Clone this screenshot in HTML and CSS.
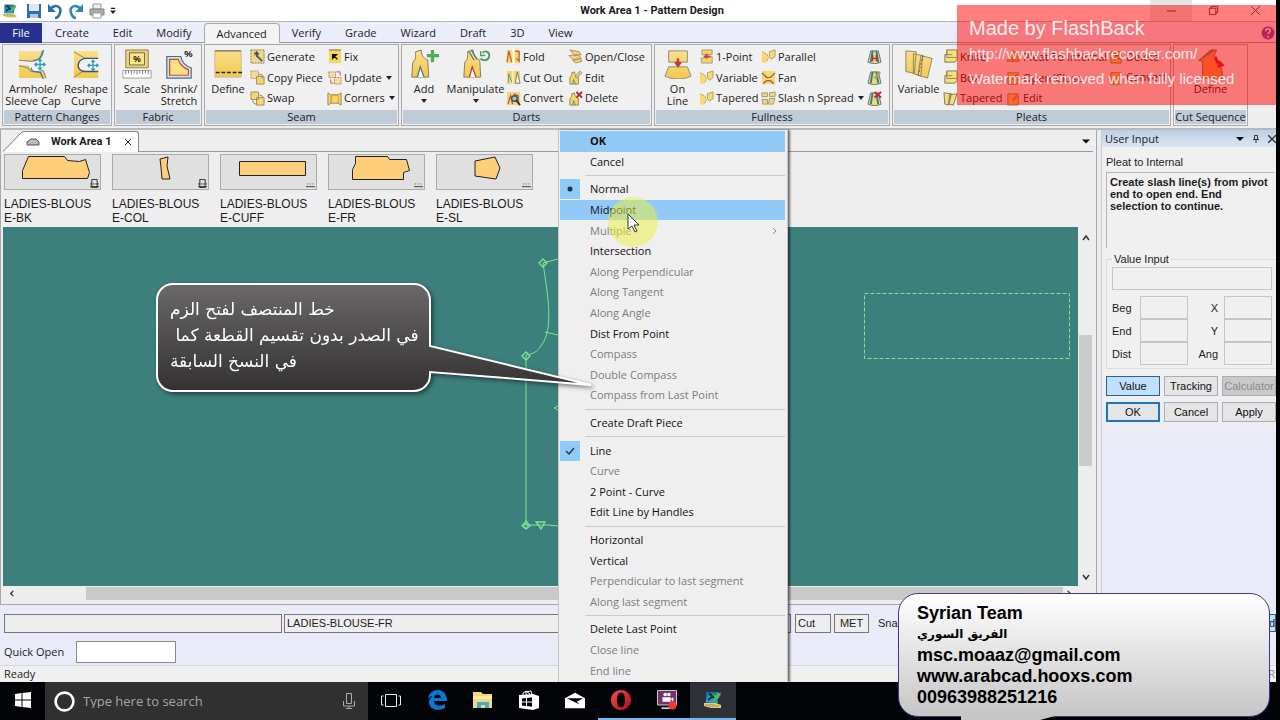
FILE: index.html
```html
<!DOCTYPE html>
<html lang="en">
<head>
<meta charset="utf-8">
<title>Work Area 1 - Pattern Design</title>
<link rel="stylesheet" href="styles.css">
</head>
<body>
<svg class="defs" aria-hidden="true">
  <defs>
    <linearGradient id="gold" x1="0" y1="0" x2="0" y2="1"><stop offset="0" stop-color="#f9e08a"/><stop offset="1" stop-color="#f2c84f"/></linearGradient>
    <linearGradient id="dark" x1="0" y1="0" x2="0" y2="1"><stop offset="0" stop-color="#6a6868"/><stop offset="1" stop-color="#333131"/></linearGradient>
    <linearGradient id="opera" x1="0" y1="0" x2="1" y2="1"><stop offset="0" stop-color="#ff4a50"/><stop offset="1" stop-color="#a80d1c"/></linearGradient>
  </defs>
  <symbol id="app" viewBox="0 0 20 20"><path d="M3 2h12v11H3z" fill="#1479a8"/><path d="M2 12l4-7 3 4 6-7 3 3-5 3 2 5z" fill="#2b9fc6"/><path d="M9 4l4 2 5-4-2 6-5 3z" fill="#5ab847"/><path d="M6 3l5 5M5 10l4-3" stroke="#12323f" stroke-width="2"/><path d="M1 13h12l5 2v3H8l-7-2z" fill="#e5ce79"/><path d="M3 14v2m2-2v2m2-2v3m2-3v3m2-3v3m2-2v2m2-2v2" stroke="#8a7431" stroke-width=".7"/></symbol>
  <symbol id="move" viewBox="0 0 12 12"><path d="M6 1v10M1 6h10M4.300 2.700L6 1l1.700 1.700M4.300 9.300L6 11l1.700-1.700M2.700 4.300L1 6l1.700 1.700M9.300 4.300L11 6l-1.700 1.700" fill="none" stroke="#2a9db8" stroke-width="1.300"/></symbol>
  <symbol id="armhole" viewBox="0 0 32 32"><path d="M1 2h25c-1 8-5 11-12 12L1 12zM1 17h10c2 6 6 8 16 7l3 7H1z" fill="url(#gold)"/><path d="M26 2c-2 8-5 11-12 11L1 12M1 18l10 2c1 5 5 5 16 3l3 8" fill="none" stroke="#777" stroke-width="1"/><path d="M27 1c-1 9-5 11-11 11M14 20c0 6 8 4 10 5l3 7" fill="none" stroke="#3a78a0" stroke-width="1.300"/><use href="#move" x="17" y="10" width="13" height="13"/></symbol>
  <symbol id="reshape" viewBox="0 0 32 32"><path d="M3 2h26v8H16c-8 1-10 9-4 13 4 2 9 1 17 1v7H3z" fill="url(#gold)"/><path d="M3 3l12 7M3 30l11-7" stroke="#92804d" stroke-width="1"/><path d="M29 10H15C6 12 5 21 13 24h16" fill="none" stroke="#3b5674" stroke-width="1.500"/><use href="#move" x="17" y="11" width="13" height="13"/></symbol>
  <symbol id="scale" viewBox="0 0 32 32"><path d="M4 1h24v19H4z" fill="#f0d271" stroke="#8b8050"/><path d="M8 4h16v13H8z" fill="#ffe383" stroke="#666"/><text x="16" y="14" text-anchor="middle" font-size="9" font-weight="700" font-family="Liberation Sans, sans-serif">%</text><path d="M1 23h30v8H1z" fill="#fff" stroke="#9b9b9b"/><path d="M4 23v4m3-4v3m3-3v4m3-4v3m3-3v4m3-4v3m3-3v4m3-4v3m3-3v4" stroke="#777"/></symbol>
  <symbol id="shrink" viewBox="0 0 32 32"><path d="M3 8h15c1 6 4 10 11 12v11H3z" fill="#cfe3ef" stroke="#47708e" stroke-width="1.300"/><path d="M6 11h9c2 6 5 9 11 11v6H6z" fill="#ffe083" stroke="#d8432c" stroke-width="1.300"/><text x="26" y="9" text-anchor="middle" font-size="10" font-weight="700" font-family="Liberation Sans, sans-serif">%</text></symbol>
  <symbol id="define" viewBox="0 0 32 32"><path d="M2 2h28v28H2z" fill="url(#gold)" stroke="#c9b88c"/><path d="M2 2h28" stroke="#555"/><path d="M3 25h28" stroke="#222" stroke-width="1.500" stroke-dasharray="4 2"/></symbol>
  <symbol id="cut-define" viewBox="0 0 32 32"><path d="M3 12L16 1h6l-3 7 6 6 3 10v7H7V13z" fill="#f6a344" stroke="#8b6a4a"/><path d="M1 14L16 1h5z" fill="#777"/><path d="M21 8c0 6 3 8 7 9m-4-4l4 4-5 2" fill="none" stroke="#d62530" stroke-width="3"/></symbol>
  <symbol id="dart" viewBox="0 0 32 32"><path d="M4 14c4-3 3-7 3-11l6-2c0 5 2 9 7 11l1 18H3z" fill="url(#gold)" stroke="#86795b"/></symbol>
  <symbol id="add" viewBox="0 0 32 32"><use href="#dart"/><path d="M9 30l3-11 4 11" fill="#fff" stroke="#3b78a4" stroke-width="1.400"/><path d="M25 1v13M19 7h13" stroke="#51ad51" stroke-width="3.500"/></symbol>
  <symbol id="manipulate" viewBox="0 0 32 32"><use href="#dart"/><path d="M9 30l3-11 4 11" fill="#fff" stroke="#b9443b" stroke-width="1.400"/><path d="M8 2l6 10M11 1l6 10" stroke="#4d7c6a" stroke-width="1.300"/><path d="M23 4c3-3 8-1 7 4s-7 5-9 2" fill="none" stroke="#529b66" stroke-width="2"/><path d="M21 2v5h5" fill="none" stroke="#529b66" stroke-width="1.500"/></symbol>
  <symbol id="online" viewBox="0 0 32 32"><path d="M6 2h20v12H6zM6 19h20l4 10c-9 4-19 4-28 0z" fill="url(#gold)" stroke="#8f8b79"/><path d="M16 10v7m-3-3l3 4 3-4" fill="none" stroke="#c73535" stroke-width="2.500"/></symbol>
  <symbol id="pleat" viewBox="0 0 32 32"><path d="M2 2l11 1-2 23-9-2zM10 5l10 2-2 22-8-3zM18 7l12 3-5 21-10-3z" fill="url(#gold)" stroke="#8a845f"/><path d="M20 7l-5 22" stroke="#555" stroke-dasharray="2 2"/></symbol>
  <symbol id="wand" viewBox="0 0 16 16"><path d="M1 1h14v14H1z" fill="#f5d982" stroke="#79745e" stroke-dasharray="2 1"/><path d="M7 7l6 6" stroke="#365f8d" stroke-width="2"/><path d="M7 2v6M4 5h6M5 3l4 4m0-4L5 7" stroke="#3e4246"/></symbol>
  <symbol id="copy" viewBox="0 0 16 16"><path d="M1 1h8v8H1z" fill="#f4dc8d" stroke="#a59674" stroke-dasharray="2 1"/><path d="M7 7h8v8H7z" fill="#f5d36d" stroke="#998c6a"/><path d="M9 5h4v4" fill="none" stroke="#b46b5b"/></symbol>
  <symbol id="swap" viewBox="0 0 16 16"><path d="M1 1h8v8H1zM7 7h8v8H7z" fill="#f7d766" stroke="#998c6a"/><path d="M3 10c0 3 2 4 4 4m3-10l4 2" fill="none" stroke="#777"/></symbol>
  <symbol id="fix" viewBox="0 0 16 16"><path d="M2 1h13v14H2z" fill="#f5d65e"/><path d="M2 1h13" stroke="#666"/><path d="M6 6l5 5M6 6v4l4-4z" fill="#111" stroke="#111" stroke-width="1.500"/></symbol>
  <symbol id="update" viewBox="0 0 16 16"><path d="M2 2h7v6H2zM8 8h7v7H8z" fill="#f6db9a" stroke="#a78b69" stroke-dasharray="2 1"/><path d="M10 2h4v4m-10 4v4h3" fill="none" stroke="#c35151"/></symbol>
  <symbol id="corners" viewBox="0 0 16 16"><path d="M1 2l3 2h8l3-2v13l-3-2H4l-3 2z" fill="#f8d95e" stroke="#8e835d"/><path d="M4 4v9M12 4v9" stroke="#c9a04c"/><path d="M5 12V5h6" fill="none" stroke="#df9a35"/></symbol>
  <symbol id="fold" viewBox="0 0 16 16"><path d="M1 1h14v14H1z" fill="#f5d769"/><path d="M7 0h2v16H7z" fill="#fff"/><path d="M1 14L3 2l3 12M10 2l4 1v10l-3-3" fill="none" stroke="#c8553c" stroke-width="1.300"/></symbol>
  <symbol id="cutout" viewBox="0 0 16 16"><path d="M1 1h14v14H1z" fill="#f5d769"/><path d="M7 0h1v16H7z" fill="#fff"/><path d="M3 14V4l3 9m4 1l2-12 3 12z" fill="#fff8d5" stroke="#5f7f91"/></symbol>
  <symbol id="convert" viewBox="0 0 16 16"><path d="M1 1h14v14H1z" fill="#f2d47c"/><path d="M2 14L5 5l2 9M8 3l5 2v7" fill="none" stroke="#b65344" stroke-width="1.300"/><circle cx="9" cy="8" r="3" fill="#aebfc8" stroke="#45525b" stroke-width="1.500"/><path d="M11 10l4 5" stroke="#333" stroke-width="2"/></symbol>
  <symbol id="open" viewBox="0 0 16 16"><path d="M2 1l10 2 2 3-7 1zM1 7l10-1 3 4-8 2zM5 12l8-2 2 3-7 2z" fill="#f2d378" stroke="#a78f61"/></symbol>
  <symbol id="edit" viewBox="0 0 16 16"><path d="M2 15V8c2-1 2-3 2-5l3-1c0 3 1 5 4 6v7z" fill="#f5da62" stroke="#8a865b"/><path d="M5 15l1-5 2 5" fill="none" stroke="#698798"/><path d="M13 1l2 2-5 5H8V6z" fill="#dfc49a" stroke="#917453" stroke-width=".7"/></symbol>
  <symbol id="delete" viewBox="0 0 16 16"><path d="M2 15V8c2-1 2-3 2-5l3-1c0 3 1 5 4 6v7z" fill="#f5da62" stroke="#8a865b"/><path d="M5 15l1-5 2 5" fill="none" stroke="#698798"/><path d="M9 1l6 6m0-6L9 7" stroke="#b51d2d" stroke-width="2"/></symbol>
  <symbol id="fold-edit" viewBox="0 0 16 16"><path d="M2 3h11v12H2z" fill="#f7d35c" stroke="#8a865b"/><path d="M6 10l5-6 2 2-5 5z" fill="#d9865a"/></symbol>
  <symbol id="fold-del" viewBox="0 0 16 16"><path d="M2 3h11v12H2z" fill="#f7d35c" stroke="#8a865b"/><path d="M6 5l5 6m0-6l-5 6" stroke="#c2402e" stroke-width="1.500"/></symbol>
  <symbol id="to-internal" viewBox="0 0 16 16"><path d="M1 13L7 2l7 3v8z" fill="#f6b64c" stroke="#a07b45"/><path d="M7 2v11" stroke="#a07b45"/></symbol>
  <symbol id="point" viewBox="0 0 16 16"><path d="M3 1h11v5H3zM2 10l12-2v7H3z" fill="#f4d467" stroke="#a19a78"/><path d="M8 5v5M5 8h7" stroke="#c9403a" stroke-width="2"/></symbol>
  <symbol id="spread" viewBox="0 0 16 16"><path d="M1 3l5 2 2 4-2 5-5 1z" fill="#f7da6b"/><path d="M9 3l6-2v7l-4 3-2-3z" fill="#f7da6b" stroke="#a69c72"/><path d="M1 3l5 2 2 4-2 5" fill="none" stroke="#a69c72" stroke-dasharray="2 1"/></symbol>
  <symbol id="fan" viewBox="0 0 16 16"><path d="M1 1h14v14H1z" fill="#f5d775"/><path d="M1 3l5 5h4l5-5M3 15c1-5 9-5 10 0" fill="none" stroke="#87603f" stroke-width="1.300"/></symbol>
  <symbol id="slash" viewBox="0 0 16 16"><path d="M1 2h6v4H1zM9 2l6-1v5H9zM1 9h6v5H2zM9 8h6l-2 6H8z" fill="#f0d775" stroke="#9c997f"/></symbol>
  <symbol id="skirt" viewBox="0 0 16 16"><path d="M4 2h8l3 12c-4 2-10 2-14 0z" fill="#f3da70" stroke="#56717e"/><path d="M6 2L4 14M10 2l2 12" stroke="#287da1" stroke-width="2"/></symbol>
  <symbol id="skirt-red" viewBox="0 0 16 16"><use href="#skirt"/><path d="M6 6v7m4-7v7M6 10h4" stroke="#b82f3c" stroke-width="1.500"/></symbol>
  <symbol id="skirt-edit" viewBox="0 0 16 16"><use href="#skirt"/><path d="M8 9l6-7" stroke="#bb9d58" stroke-width="2.500"/></symbol>
  <symbol id="skirt-del" viewBox="0 0 16 16"><use href="#skirt"/><path d="M8 1l7 6m0-6L8 7" stroke="#bd2635" stroke-width="2"/></symbol>
  <symbol id="knife" viewBox="0 0 16 16"><path d="M4 1h11v11l-3 2H2V6h2z" fill="#f7e078" stroke="#77745e"/><path d="M2 6h8M4 1v8h11" fill="none" stroke="#8b865b"/></symbol>
  <symbol id="tapered" viewBox="0 0 16 16"><path d="M1 2l8 1-3 12-4-1zM7 4l8-1-4 12-5-1z" fill="#f5df75" stroke="#77745e"/></symbol>
  <symbol id="half" viewBox="0 0 14 8"><path d="M1 7V4l4-3h5l3 3v3z" fill="#bbb" stroke="#555"/></symbol>
  <symbol id="stack" viewBox="0 0 10 10"><path d="M2 .5h6v9H2zM0 5.500h2m1 0h2m1 0h2m1 0h1M0 8.500h10" fill="none" stroke="#222"/></symbol>
  <symbol id="dots" viewBox="0 0 10 10"><path d="M0 8.500h10" stroke="#333"/><path d="M1 5.500h8" stroke="#333" stroke-dasharray="1 2"/></symbol>
</svg>

<div class="desktop">
<main class="app">
  <header class="titlebar">
    <div class="quick">
      <svg class="i16"><use href="#app"/></svg>
      <button aria-label="Save"><svg class="i16" viewBox="0 0 16 16"><path d="M1 1h14v14H1z" fill="#2f6ea9"/><path d="M3 1h10v7H3z" fill="#dbe7f2"/><path d="M4 11h8v4H4z" fill="#b7c9d9"/></svg></button>
      <button aria-label="Undo"><svg class="i16" viewBox="0 0 16 16"><path d="M3 6c6-6 12-2 10 4-1 3-3 5-5 5" fill="none" stroke="#2a6fa5" stroke-width="2.500"/><path d="M1 1v8h8z" fill="#2a6fa5"/></svg></button>
      <button aria-label="Redo"><svg class="i16" viewBox="0 0 16 16"><path d="M13 6C7 0 1 4 3 10c1 3 3 5 5 5" fill="none" stroke="#2a86b5" stroke-width="2.500"/><path d="M15 1v8H7z" fill="#2a86b5"/></svg></button>
      <button aria-label="Print"><svg class="i16" viewBox="0 0 16 16"><path d="M4 1h8v5H4z" fill="#eee" stroke="#999"/><path d="M1 6h14v6H1z" fill="#aaa" stroke="#888"/><path d="M4 10h8v5H4z" fill="#fff" stroke="#999"/></svg></button>
      <button aria-label="Customize"><svg class="i7" viewBox="0 0 7 8"><path d="M1 1.500h5" stroke="#222" stroke-width="1.500"/><path d="M0 4h7L3.500 8z" fill="#222"/></svg></button>
    </div>
    <h1>Work Area 1 - Pattern Design</h1>
    <div class="winbtns">
      <button class="hover" aria-label="Minimize"><svg viewBox="0 0 12 12"><path d="M1 6.500h10" stroke="#333"/></svg></button>
      <button aria-label="Restore"><svg viewBox="0 0 12 12"><path d="M1.500 3.500h7v7h-7zM3.500 3.500v-2h7v7h-2" fill="none" stroke="#333"/></svg></button>
      <button aria-label="Close"><svg viewBox="0 0 12 12"><path d="M1 1l10 10M11 1L1 11" stroke="#333"/></svg></button>
    </div>
  </header>

  <nav class="tabs">
    <button class="file">File</button><button>Create</button><button>Edit</button><button>Modify</button><button class="active">Advanced</button><button>Verify</button><button>Grade</button><button>Wizard</button><button>Draft</button><button>3D</button><button>View</button>
    <button class="help" aria-label="Help"><svg class="i12" viewBox="0 0 12 12"><circle cx="6" cy="6" r="5.500" fill="#6a49a8"/><path d="M4 4.500c0-3 4-2.500 4-.5 0 1.500-2 1.500-2 3M6 8.500V10" fill="none" stroke="#fff" stroke-width="1.300"/></svg></button>
  </nav>

  <section class="ribbon">
    <div class="group g-pattern"><div class="tools">
      <button class="big"><svg><use href="#armhole"/></svg>Armhole/<br>Sleeve Cap</button>
      <button class="big"><svg><use href="#reshape"/></svg>Reshape<br>Curve</button>
    </div><h2>Pattern Changes</h2></div>

    <div class="group g-fabric"><div class="tools">
      <button class="big"><svg><use href="#scale"/></svg>Scale</button>
      <button class="big"><svg><use href="#shrink"/></svg>Shrink/<br>Stretch</button>
    </div><h2>Fabric</h2></div>

    <div class="group g-seam"><div class="tools">
      <button class="big"><svg><use href="#define"/></svg>Define</button>
      <div class="col"><button><svg><use href="#wand"/></svg>Generate</button><button><svg><use href="#copy"/></svg>Copy Piece</button><button><svg><use href="#swap"/></svg>Swap</button></div>
      <div class="col"><button><svg><use href="#fix"/></svg>Fix</button><button class="drop"><svg><use href="#update"/></svg>Update</button><button class="drop"><svg><use href="#corners"/></svg>Corners</button></div>
    </div><h2>Seam</h2></div>

    <div class="group g-darts"><div class="tools">
      <button class="big drop"><svg><use href="#add"/></svg>Add</button>
      <button class="big drop"><svg><use href="#manipulate"/></svg>Manipulate</button>
      <div class="col"><button><svg><use href="#fold"/></svg>Fold</button><button><svg><use href="#cutout"/></svg>Cut Out</button><button><svg><use href="#convert"/></svg>Convert</button></div>
      <div class="col"><button><svg><use href="#open"/></svg>Open/Close</button><button><svg><use href="#edit"/></svg>Edit</button><button><svg><use href="#delete"/></svg>Delete</button></div>
    </div><h2>Darts</h2></div>

    <div class="group g-full"><div class="tools">
      <button class="big"><svg><use href="#online"/></svg>On<br>Line</button>
      <div class="col"><button><svg><use href="#point"/></svg>1-Point</button><button><svg><use href="#spread"/></svg>Variable</button><button><svg><use href="#spread"/></svg>Tapered</button></div>
      <div class="col"><button><svg><use href="#spread"/></svg>Parallel</button><button><svg><use href="#fan"/></svg>Fan</button><button class="drop"><svg><use href="#slash"/></svg>Slash n Spread</button></div>
      <div class="col"><button aria-label="Join fullness"><svg><use href="#skirt-red"/></svg></button><button aria-label="Edit fullness"><svg><use href="#skirt-edit"/></svg></button><button aria-label="Delete fullness"><svg><use href="#skirt-del"/></svg></button></div>
    </div><h2>Fullness</h2></div>

    <div class="group g-pleats"><div class="tools">
      <button class="big"><svg><use href="#pleat"/></svg>Variable</button>
      <div class="col"><button><svg><use href="#knife"/></svg>Knife</button><button><svg><use href="#knife"/></svg>Box</button><button><svg><use href="#tapered"/></svg>Tapered</button></div>
      <div class="col"><button><svg><use href="#to-internal"/></svg>Pleat To Internal</button><button><svg><use href="#fold-edit"/></svg>Open/Close</button><button><svg><use href="#fold-edit"/></svg>Edit</button></div>
      <div class="col"><button><svg><use href="#fold-del"/></svg>Delete</button><button><svg><use href="#fold-edit"/></svg>Convert</button></div>
    </div><h2>Pleats</h2></div>

    <div class="group g-cut"><div class="tools">
      <button class="big"><svg><use href="#cut-define"/></svg>Define</button>
    </div><h2>Cut Sequence</h2></div>
  </section>

  <div class="middle">
    <section class="workspace">
      <div class="doctabs">
        <svg class="slant" viewBox="0 0 22 21"><path d="M0 21h22V0H20z" fill="#fff"/><path d="M0 20.500L19 1l3-.5" fill="none" stroke="#777"/></svg>
        <div class="doctab"><svg><use href="#half"/></svg><strong>Work Area 1</strong><button aria-label="Close tab"><svg class="x" viewBox="0 0 8 8"><path d="M1 1l6 6M7 1L1 7" stroke="#222"/></svg></button></div>
        <button class="list" aria-label="Tab list"><svg class="tri" viewBox="0 0 8 4"><path d="M0 0h8L4 4z"/></svg></button>
      </div>
      <div class="pieces">
        <figure><div class="thumb"><svg class="shape" viewBox="0 0 94 34"><path d="M23.500 1.500h36l3 4 12 1 6-2 4 13-2 6h-65v-8z"/></svg><svg class="mark"><use href="#stack"/></svg></div><figcaption>LADIES-BLOUS<br>E-BK</figcaption></figure>
        <figure><div class="thumb"><svg class="shape" viewBox="0 0 94 34"><path d="M47 4l8-2-1 9 3 13h-8l-1-12z"/></svg><svg class="mark"><use href="#stack"/></svg></div><figcaption>LADIES-BLOUS<br>E-COL</figcaption></figure>
        <figure><div class="thumb"><svg class="shape" viewBox="0 0 94 34"><path d="M18.500 6.500h66v14h-66z"/></svg><svg class="mark"><use href="#dots"/></svg></div><figcaption>LADIES-BLOUS<br>E-CUFF</figcaption></figure>
        <figure><div class="thumb"><svg class="shape" viewBox="0 0 94 34"><path d="M26.500 1.500h32l2 3h17l3 11-6 2v7h-51v-10l3-6z"/></svg><svg class="mark"><use href="#dots"/></svg></div><figcaption>LADIES-BLOUS<br>E-FR</figcaption></figure>
        <figure><div class="thumb"><svg class="shape" viewBox="0 0 94 34"><path d="M38 6l20-4 5 11-4 11-21-3z"/></svg><svg class="mark"><use href="#dots"/></svg></div><figcaption>LADIES-BLOUS<br>E-SL</figcaption></figure>
      </div>
      <div class="canvas-row">
        <div class="canvas">
          <svg width="1076" height="359" viewBox="3 227 1076 359" fill="none" stroke="#7be78a">
            <path d="M558 259l-15 4c5 34 11 66-2 83-4 6-8 8-15 9v170h15l7 0 10 1M545 332l13 3M558 406l-4 2 4 2"/>
            <path d="M543 259l4 4-4 4-4-4zM526 352l4 4-4 4-4-4zM526 521l4 5-4 3-4-3zM536 522h9l-4 7z" stroke-width="1.300"/>
            <circle cx="526" cy="526" r="2"/>
            <path d="M864.500 293.500h205v65h-205z" stroke-dasharray="4 2"/>
          </svg>
        </div>
        <div class="vscroll"><svg viewBox="0 0 8 5"><path d="M1 5l3-4 3 4"/></svg><i></i><svg viewBox="0 0 8 5"><path d="M1 0l3 4 3-4"/></svg></div>
      </div>
      <div class="hscroll"><svg viewBox="0 0 5 8"><path d="M4 1L1 4l3 3"/></svg><i></i><svg viewBox="0 0 5 8"><path d="M1 1l3 3-3 3"/></svg></div>
    </section>

    <aside class="panel">
      <header>User Input<svg viewBox="0 0 8 4"><path d="M0 0h8L4 4z"/></svg><svg viewBox="0 0 8 8"><path d="M2.500 4.500v-4h3v4M1 4.500h6M4 5v3" fill="none" stroke="#333"/></svg><svg viewBox="0 0 8 8"><path d="M0 0l8 8M8 0L0 8" stroke="#333" stroke-width="1.300"/></svg></header>
      <label for="prompt">Pleat to Internal</label>
      <textarea id="prompt" readonly>Create slash line(s) from pivot end to open end. End selection to continue.</textarea>
      <fieldset>
        <legend>Value Input</legend>
        <input class="wide" aria-label="Value" disabled>
        <label for="beg">Beg</label><input id="beg" disabled><label class="r" for="x">X</label><input id="x" disabled>
        <label for="end">End</label><input id="end" disabled><label class="r" for="y">Y</label><input id="y" disabled>
        <label for="dist">Dist</label><input id="dist" disabled><label class="r" for="ang">Ang</label><input id="ang" disabled>
      </fieldset>
      <div class="buttons">
        <button class="on">Value</button><button>Tracking</button><button disabled>Calculator</button>
        <button class="default">OK</button><button>Cancel</button><button>Apply</button>
      </div>
    </aside>
  </div>

  <section class="info">
    <div class="inforow">
      <input class="f1" aria-label="Message" readonly><input class="f2" aria-label="Piece" value="LADIES-BLOUSE-FR" readonly><input class="f3" aria-label="Type" value="Cut" readonly><button class="met">MET</button><span class="snap">Snap</span><button class="grid">d</button>
    </div>
    <div class="quickopen"><label for="qo">Quick Open</label><input id="qo"></div>
  </section>
  <footer class="status"><span>Ready</span><span class="dim">R</span></footer>

  <ul class="menu">
    <li class="hl"><button><b>OK</b></button></li>
    <li><button>Cancel</button></li>
    <li class="sep"></li>
    <li class="chk"><svg viewBox="0 0 20 20"><circle cx="10" cy="10" r="2.500" fill="#163450"/></svg><button>Normal</button></li>
    <li class="hl"><button>Midpoint</button></li>
    <li class="sub"><button disabled>Multiple</button><svg class="arrow" viewBox="0 0 5 8"><path d="M1 1l3 3-3 3" fill="none" stroke="#888"/></svg></li>
    <li><button>Intersection</button></li>
    <li><button disabled>Along Perpendicular</button></li>
    <li><button disabled>Along Tangent</button></li>
    <li><button disabled>Along Angle</button></li>
    <li><button>Dist From Point</button></li>
    <li><button disabled>Compass</button></li>
    <li><button disabled>Double Compass</button></li>
    <li><button disabled>Compass from Last Point</button></li>
    <li class="sep"></li>
    <li><button>Create Draft Piece</button></li>
    <li class="sep"></li>
    <li class="chk"><svg viewBox="0 0 20 20"><path d="M6 10l3 3 5-6" fill="none" stroke="#163450" stroke-width="1.300"/></svg><button>Line</button></li>
    <li><button disabled>Curve</button></li>
    <li><button>2 Point - Curve</button></li>
    <li><button>Edit Line by Handles</button></li>
    <li class="sep"></li>
    <li><button>Horizontal</button></li>
    <li><button>Vertical</button></li>
    <li><button disabled>Perpendicular to last segment</button></li>
    <li><button disabled>Along last segment</button></li>
    <li class="sep"></li>
    <li><button>Delete Last Point</button></li>
    <li><button disabled>Close line</button></li>
    <li><button disabled>End line</button></li>
  </ul>
  <svg class="cursor" viewBox="0 0 60 60"><circle cx="34" cy="26" r="25" fill="#f0f23c" fill-opacity=".5"/><path d="M29 18v15l4-3 3 6 2-1-3-6h5z" fill="#fff" stroke="#333"/></svg>
</main>

<nav class="taskbar">
  <button class="start" aria-label="Start"><svg class="i16" viewBox="0 0 16 16" fill="#fff"><path d="M0 2l6.500-1v6.500H0zM7.500 1L16 0v7.500H7.500zM0 8.500h6.500V15L0 14zM7.500 8.500H16V16l-8.500-1z"/></svg></button>
  <div class="search"><svg class="ring" viewBox="0 0 20 20"><circle cx="10" cy="10" r="8.500" fill="none" stroke="#fff" stroke-width="2.500"/></svg><input aria-label="Search" placeholder="Type here to search"><svg class="mic" viewBox="0 0 12 16"><path d="M3.500.5h5v10h-5zM.500 8v5h11V8M6 13v3M3 15.500h6" fill="none" stroke="#aaa"/></svg></div>
  <button aria-label="Task view"><svg viewBox="0 0 20 20" fill="none" stroke="#eee"><path d="M4.500 4.500h11v12h-11zM2.500 6h-2v9h2M17.500 6h2v9h-2"/></svg></button>
  <button aria-label="Edge"><svg viewBox="0 0 20 20"><path d="M1 9C2 3 6 0 11 0c6 0 9 5 9 11H7c0 5 6 6 11 3v4C10 22 2 19 2 12c0-3 2-5 4-6-3 0-4 2-5 3zm6-1h7c0-4-6-5-7 0z" fill="#0a78d7"/></svg></button>
  <button aria-label="File Explorer"><svg viewBox="0 0 20 20"><path d="M0 2h8l2 2h9v14H0z" fill="#f4d67f"/><path d="M0 6h19v3H0z" fill="#ffe9a3"/><path d="M4 18v-6h12v6h-4v-3H8v3z" fill="#3ab0cf"/></svg></button>
  <button aria-label="Store"><svg viewBox="0 0 20 20"><path d="M0 5l14-1 6 2v12l-6 2-14-2z" fill="#fff"/><path d="M4 5V3l3-2 4 3M7 5V2l5-1 1 4" fill="none" stroke="#fff"/><path d="M3 8.500l4-.5v3.500H3zM8 8l5-.8v4.300H8zM3 12.500h4V16l-4-.5zM8 12.500h5v4.300L8 16z" fill="#000"/></svg></button>
  <button aria-label="Mail"><svg viewBox="0 0 22 20"><path d="M0 8l11-6 11 6v11H0z" fill="#fff"/><path d="M2 8h18l-7 4 3 3z" fill="#000"/></svg></button>
  <button class="run" aria-label="Opera"><svg viewBox="0 0 20 20"><path fill-rule="evenodd" d="M10 0c6 0 10 4.500 10 10s-4 10-10 10S0 15.500 0 10 4 0 10 0zm0 2.500C7.500 2.500 6 6 6 10s1.500 7.500 4 7.500 4-3.500 4-7.500-1.500-7.500-4-7.500z" fill="url(#opera)"/></svg></button>
  <button class="run" aria-label="FlashBack"><svg viewBox="0 0 22 22"><path d="M.5.500h21v16H.500z" fill="#74316b" stroke="#ddd"/><circle cx="9" cy="5" r="2" fill="#fff"/><circle cx="13" cy="5" r="2" fill="#fff"/><path d="M6 8h9v5H6zM15 10l3-2v5z" fill="#fff"/><path d="M5 20h10" stroke="#ccc" stroke-width="2"/><circle cx="17" cy="17" r="4.500" fill="#ee3a3a"/></svg></button>
  <button class="run current" aria-label="Pattern Design"><svg><use href="#app"/></svg></button>
</nav>

<div class="bubble">
  <svg viewBox="0 0 444 116"><path d="M16 1h242a16 16 0 0 1 16 16v46l161 39-161-13v3a16 16 0 0 1-16 16H16A16 16 0 0 1 1 92V17A16 16 0 0 1 16 1z" fill="url(#dark)" stroke="#fff" stroke-width="2"/></svg>
  <p dir="rtl" lang="ar">خط المنتصف لفتح الزم
في الصدر بدون تقسيم القطعة كما 
في النسخ السابقة</p>
</div>

<div class="watermark"><p class="big-line">Made by FlashBack</p><p>http://www.flashbackrecorder.com/</p><p>Watermark removed when fully licensed</p></div>

<address class="contact"><p>Syrian Team</p><p class="ar" lang="ar">الفريق السوري</p><p>msc.moaaz@gmail.com</p><p>www.arabcad.hooxs.com</p><p>00963988251216</p></address>
</div>
</body>
</html>
```
FILE: styles.css
```css
* { box-sizing: border-box; }
body { margin: 0; background: #000; color: #1c1c1c; font: 11px/14px "Open Sans", "Noto Sans", sans-serif; }
h1, h2, p, ul, figure, fieldset { margin: 0; padding: 0; }
button { font: inherit; color: inherit; background: none; border: 0; padding: 0; }
input, textarea { font: inherit; color: inherit; min-width: 0; }
svg { display: block; flex: none; }
.defs { position: absolute; width: 0; height: 0; }
.i16 { width: 16px; height: 16px; }
.i12 { width: 14px; height: 14px; }
.i7 { width: 6px; height: 7px; }

.desktop { position: relative; display: flex; flex-direction: column; min-height: 100vh; overflow: hidden; }
.app { position: relative; flex: 1; display: flex; flex-direction: column; margin-right: 4px; background: #ececf0; }

.titlebar { display: flex; align-items: center; height: 21px; background: #fff; }
.quick { display: flex; align-items: center; gap: 5px; width: 122px; padding-left: 2px; }
.quick button:nth-child(2) { margin-left: 3px; }
.titlebar h1 { flex: 1; padding-left: 32px; text-align: center; font: 700 11px/14px Roboto, "Open Sans", sans-serif; }
.winbtns { display: flex; align-self: stretch; }
.winbtns button { width: 42px; display: grid; place-items: center; }
.winbtns .hover { background: #e5e5e5; }
.winbtns svg { width: 11px; height: 11px; }

.tabs { display: flex; height: 22px; padding-top: 1px; border-top: 1px solid #b6b6b6; border-bottom: 1px solid #9b9ca4; background: #ebedfa; }
.tabs button { padding: 0 12px; height: 20px; }
.tabs .file { width: 42px; margin-right: 1px; padding: 0; background: #27318d; color: #fff; }
.tabs .active { background: #f3f3f4; border: 1px solid #aaa; border-bottom: 0; border-radius: 4px 4px 0 0; height: 21px; }
.tabs .help { margin-left: auto; padding: 0 1px; }

.ribbon { display: flex; gap: 2px; height: 87px; padding: 1px 2px 2px; background: #eeeeef; border-bottom: 2px solid #b9b9bb; }
.group { flex: none; display: flex; flex-direction: column; padding: 1px; border: 1px solid #a9a9ae; background: #f0f0f0; overflow: hidden; }
.group h2 { flex: none; height: 14px; background: #bfcbd7; text-align: center; font-size: 11px; line-height: 14px; font-weight: 400; white-space: nowrap; }
.tools { flex: 1; min-height: 0; display: grid; align-items: start; white-space: nowrap; }
.g-pattern { width: 110px; } .g-pattern .tools { grid-template-columns: 58px 1fr; }
.g-fabric { width: 88px; } .g-fabric .tools { grid-template-columns: 42px 1fr; }
.g-seam { width: 195px; } .g-seam .tools { grid-template-columns: 44px 77px 1fr; }
.g-darts { width: 251px; } .g-darts .tools { grid-template-columns: 42px 61px 62px 1fr; }
.g-full { width: 236px; } .g-full .tools { grid-template-columns: 43px 62px 106px 1fr; }
.g-pleats { width: 279px; } .g-pleats .tools { grid-template-columns: 49px 63px 103px 1fr; }
.g-cut { width: 75px; }
.big { display: flex; flex-direction: column; align-items: center; justify-self: center; line-height: 12px; padding-top: 3px; }
.big svg { width: 30px; height: 30px; margin-bottom: 4px; }
.drop::after { content: ""; border: 3px solid transparent; border-top: 4px solid #222; border-bottom: 0; }
.big.drop::after { margin-top: 4px; }
.col { display: flex; flex-direction: column; }
.col button { display: flex; align-items: center; gap: 2px; height: 21px; }
.col button:last-child { height: 20px; }
.col svg { width: 15px; height: 15px; }
.col .drop::after { margin-left: 2px; }

.middle { flex: 1; display: flex; gap: 4px; }
.workspace { flex: 1; min-width: 0; display: flex; flex-direction: column; padding: 1px 3px 3px 2px; border: solid #a7a7ab; border-width: 0 1px 1px 1px; background: #eeeeef; }
.doctabs { display: flex; height: 21px; border-bottom: 1px solid #9a9a9a; }
.slant { width: 22px; height: 21px; }
.doctab { display: flex; align-items: center; height: 21px; padding: 0 6px 0 1px; background: #fff; border: solid #888; border-width: 1px 1px 0 0; border-radius: 0 3px 0 0; }
.doctab svg { width: 14px; height: 8px; margin-right: 11px; }
.doctab strong { font: 700 11px/14px Roboto, "Open Sans", sans-serif; }
.doctab .x { width: 8px; height: 8px; margin: 0 0 0 12px; }
.list { margin-left: auto; padding-right: 3px; }
.tri { width: 8px; height: 5px; }
.pieces { display: flex; gap: 12px; height: 75px; padding: 2px 1px 0; font: 12px/14px "Liberation Sans", Arial, sans-serif; }
.pieces figure { width: 97px; margin-right: -1px; }
.thumb { position: relative; height: 36px; background: #e0e0e0; border: 1px solid #aaa; }
.thumb .shape { width: 94px; height: 34px; fill: #ffce7a; stroke: #222; }
.thumb .mark { position: absolute; right: 1px; bottom: 1px; width: 9px; height: 9px; }
.pieces figcaption { padding-top: 7px; white-space: nowrap; }
.canvas-row { flex: 1; display: flex; }
.canvas { position: relative; flex: 1; overflow: hidden; background: #3d7f7c; }
.canvas svg { position: absolute; left: 0; top: 0; }
.vscroll { width: 15px; display: flex; flex-direction: column; align-items: center; padding: 7px 0 5px; background: #ededed; }
.vscroll svg, .hscroll svg { width: 8px; height: 7px; fill: none; stroke: #333; stroke-width: 1.5; }
.vscroll i { width: 13px; height: 131px; margin: 94px 0 auto; background: #cbcbcb; }
.hscroll { display: flex; align-items: center; height: 15px; padding: 0 20px 0 5px; background: #ededed; }
.hscroll i { flex: 1; height: 13px; margin: 0 2px 0 70px; background: #c9c9c9; }

.panel { width: 175px; overflow: hidden; padding-left: 4px; background: linear-gradient(#f0f0f0 50%, #e9eafa 70%); border-left: 1px solid #c9cbd5; font: 11px/14px "Liberation Sans", Arial, sans-serif; white-space: nowrap; }
.panel header { display: flex; align-items: center; gap: 8px; height: 17px; margin-left: -4px; padding-left: 3px; background: linear-gradient(#bdcfe4, #dbe5f3); font-family: "Open Sans", "Noto Sans", sans-serif; }
.panel header svg { width: 8px; height: 8px; }
.panel header svg:first-of-type { height: 4px; margin-left: auto; }
.panel > label { display: block; padding: 8px 0 3px; }
.panel textarea { display: block; width: 169px; height: 76px; padding: 3px; resize: none; overflow: hidden; border: solid #b4b4bc; border-width: 1px 0 0 1px; background: #f0f0f0; font-weight: 700; line-height: 12px; }
.panel fieldset { display: grid; grid-template-columns: 28px 48px 1fr 48px; row-gap: 0; align-items: center; width: 172px; margin-top: 4px; padding: 1px 5px 3px 5px; border: 1px solid #dcdce0; }
.panel input { width: 48px; height: 23px; background: #f0f0f0; border: 1px solid #c5c5c8; }
.panel .wide { grid-column: 1 / -1; width: 100%; margin-bottom: 6px; }
.panel .r { text-align: right; padding-right: 6px; }
.buttons { display: grid; grid-template-columns: repeat(3, 54px); gap: 6px 4px; margin-top: 7px; }
.buttons button { height: 20px; background: #e5e5e5; border: 1px solid #adadad; color: #111; }
.buttons .on { background: #bfdfff; border-color: #27629c; }
.buttons .default { border: 2px solid #1877c0; }
.buttons button:disabled { background: #c9c9c9; color: #8c8c8c; }

.info { height: 60px; padding: 8px 0 0 4px; background: #e9ebf9; font: 11px/14px "Liberation Sans", Arial, sans-serif; }
.inforow { display: flex; align-items: center; height: 20px; }
.inforow input, .met { height: 19px; padding: 0 2px; background: #eee; border: 1px solid #777; }
.inforow .f1 { flex: 0 1 278px; margin-right: 2px; }
.inforow .f2 { flex: 0 1 507px; margin-right: 4px; }
.inforow .f3 { width: 36px; margin-right: 3px; }
.met { width: 35px; margin-right: 9px; }
.grid { width: 14px; height: 18px; margin-left: auto; text-align: right; background: #bfdfff; border: 1px solid #27629c; }
.quickopen { display: flex; align-items: center; padding-top: 8px; }
.quickopen label { width: 72px; font-family: "Open Sans", "Noto Sans", sans-serif; }
.quickopen input { width: 100px; height: 22px; border: 1px solid #888; background: #fff; }
.status { display: flex; justify-content: space-between; height: 17px; padding: 1px 1px 0 4px; border-top: 1px solid #d5d6dd; background: #f0f0f0; }
.dim { color: #888; }

.menu { position: absolute; left: 558px; top: 130px; bottom: 0; width: 230px; display: flex; flex-direction: column; padding: 1px 2px 1px 1px; list-style: none; background: #efefef; border: solid #c5c5c5; border-width: 0 1px; box-shadow: 2px 0 2px rgba(0,0,0,.55); }
.menu li { position: relative; flex: 1; min-height: 0; display: flex; align-items: center; padding-left: 30px; }
.menu li button { flex: 1; text-align: left; color: #111; white-space: nowrap; }
.menu li button:disabled { color: #7d7d7d; }
.menu .sep { flex: 0 0 7px; padding: 0; margin-left: 25px; border: 0; background: linear-gradient(#c8c8c8, #c8c8c8) 0 3px / 100% 1px no-repeat; }
.menu .hl { background: #91c9f7; }
.menu .chk { padding-left: 0; }
.menu .chk svg { width: 20px; height: 20px; margin-right: 10px; background: #91c9f7; }
.menu .arrow { width: 5px; height: 8px; margin-right: 8px; }
.cursor { position: absolute; left: 599px; top: 196px; width: 60px; height: 60px; }

.taskbar { display: flex; height: 38px; background: #020408; }
.taskbar button { width: 46px; display: grid; place-items: center; border-bottom: 2px solid transparent; }
.taskbar button svg { width: 20px; height: 20px; }
.taskbar .start { width: 45px; }
.taskbar .start svg { width: 16px; height: 16px; }
.search { display: flex; align-items: center; width: 323px; padding: 0 13px 0 9px; background: #303030; }
.ring { width: 21px; height: 21px; }
.search input { flex: 1; margin-left: 8px; padding: 0; border: 0; background: none; color: #aaa; font-size: 13px; }
.search input::placeholder { color: #a5a5a5; opacity: 1; }
.mic { width: 12px; height: 16px; }
.taskbar .run { border-bottom-color: #76b9ed; background-clip: padding-box; }
.taskbar .current { background-color: #2e3238; }

.bubble { position: absolute; left: 156px; top: 283px; width: 444px; filter: drop-shadow(2px 2px 2px rgba(0,0,0,.5)); }
.bubble svg { width: 444px; height: 116px; }
.bubble p { position: absolute; left: 14px; top: 13px; color: #fff; font: 17px/26px "DejaVu Sans", sans-serif; text-align: left; white-space: pre; }
.watermark { position: absolute; left: 957px; top: 5px; right: 4px; height: 100px; padding: 11px 12px; background: rgba(255,0,0,.5); color: rgba(255,255,255,.88); font: 15px/25px "Liberation Sans", Arial, sans-serif; white-space: nowrap; }
.watermark .big-line { font-size: 20px; }
.contact { position: absolute; left: 898px; bottom: 3px; width: 372px; padding: 9px 18px 8px; border: 1px solid #3b3a86; border-radius: 20px; background: linear-gradient(#fff, #c6c6c6); color: #000; font: bold 18px/21px "Liberation Sans", Arial, sans-serif; }
.contact .ar { font: bold 12px/21px "DejaVu Sans", sans-serif; }
.contact::after { content: ""; position: absolute; left: 62px; top: 100%; width: 94px; height: 5px; background: #c6c6c6; clip-path: polygon(0 0, 100% 0, 80% 100%, 0 100%); }
```
